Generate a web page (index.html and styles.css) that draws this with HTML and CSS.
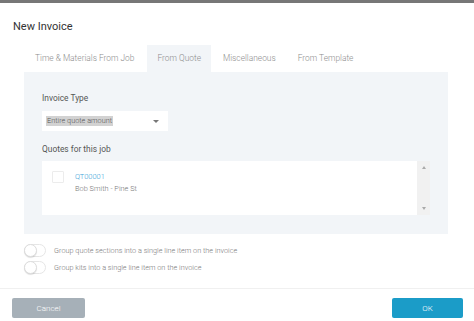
FILE: index.html
```html
<!DOCTYPE html>
<html lang="en">
<head>
  <meta charset="UTF-8">
  <title>New Invoice</title>
  <link rel="stylesheet" href="styles.css">
</head>
<body>
  <div class="topbar"></div>

  <div class="dialog">
    <h1 class="title">New Invoice</h1>

    <!-- Tabs -->
    <div class="tabs">
      <div class="tab">Time &amp; Materials From Job</div>
      <div class="tab active">From Quote</div>
      <div class="tab">Miscellaneous</div>
      <div class="tab">From Template</div>
    </div>

    <!-- From Quote panel -->
    <div class="panel">
      <label class="field-label">Invoice Type</label>
      <div class="select">
        <span class="select-text">Entire quote amount</span>
        <span class="caret"></span>
      </div>

      <label class="field-label quotes-label">Quotes for this job</label>
      <div class="quote-list">
        <div class="quote-items">
          <div class="quote-row">
            <span class="checkbox"></span>
            <div class="quote-info">
              <a class="quote-num">QT00001</a>
              <div class="quote-client">Bob Smith - Pine St</div>
            </div>
          </div>
        </div>
        <div class="scrollbar">
          <span class="arrow up"></span>
          <span class="arrow down"></span>
        </div>
      </div>
    </div>

    <!-- Options -->
    <div class="options">
      <div class="option">
        <span class="toggle"><span class="knob"></span></span>
        <span>Group quote sections into a single line item on the invoice</span>
      </div>
      <div class="option">
        <span class="toggle"><span class="knob"></span></span>
        <span>Group kits into a single line item on the invoice</span>
      </div>
    </div>
  </div>

  <div class="footer">
    <button class="btn btn-cancel">Cancel</button>
    <button class="btn btn-ok">OK</button>
  </div>
</body>
</html>
```

FILE: styles.css
```css
/* ====== BASE ====== */
html, body {
  margin: 0;
  padding: 0;
}

body {
  width: 474px;
  height: 321px;
  background: #ffffff;
  font-family: Roboto, "Liberation Sans", sans-serif;
  color: #444;
  overflow: hidden;
}

.topbar {
  height: 3px;
  background: #777;
}

/* ====== DIALOG ====== */
.dialog {
  height: 286px;
  border-bottom: 1px solid #f0f0f0;
  box-sizing: border-box;
}

.title {
  margin: 0;
  padding: 17px 0 0 13px;
  height: 25px;
  font-size: 11px;
  font-weight: 400;
  color: #333;
  line-height: 14px;
}

/* ====== TABS ====== */
.tabs {
  display: flex;
  margin-left: 24px;
}

.tab {
  height: 27px;
  line-height: 27px;
  padding: 0 11px;
  font-size: 8.4px;
  font-weight: 300;
  color: #8e8e8e;
}
.tab:first-child {
  padding: 0 13px 0 11px;
}
.tab:nth-child(2) {
  padding: 0 10px;
}
.tab:nth-child(3) {
  padding: 0 11px 0 12px;
}
.tab:nth-child(4) {
  padding-left: 11px;
}
.tab.active {
  background: #f2f5f8;
}

/* ====== PANEL ====== */
.panel {
  margin: 0 26px 0 24px;
  padding: 20px 18px 19px 18px;
  background: #f2f5f8;
  height: 162px;
  box-sizing: border-box;
}

.field-label {
  display: block;
  font-size: 8.4px;
  color: #555;
  line-height: 12px;
}

.select {
  margin-top: 7px;
  width: 126px;
  height: 20px;
  background: #fff;
  display: flex;
  align-items: center;
  justify-content: space-between;
  padding: 0 9px 0 4px;
  box-sizing: border-box;
}
.select-text {
  font-size: 7.3px;
  font-weight: 300;
  color: #555;
  background: #d2d2d2;
  padding: 0 1px;
  line-height: 10px;
}
.caret {
  width: 0;
  height: 0;
  border-left: 3px solid transparent;
  border-right: 3px solid transparent;
  border-top: 3px solid #777;
}

.quotes-label {
  margin-top: 12px;
}

.quote-list {
  margin-top: 6px;
  display: flex;
  height: 54px;
}
.quote-items {
  flex: 1;
  background: #fff;
}
.quote-row {
  display: flex;
  padding: 10px 10px;
}
.checkbox {
  width: 10px;
  height: 10px;
  border: 1px solid #ececec;
  border-radius: 1px;
  margin-right: 11px;
}
.quote-info {
  font-size: 7.4px;
  font-weight: 300;
  line-height: 12px;
}
.quote-num {
  color: #3ea3d8;
}
.quote-client {
  color: #777;
}

.scrollbar {
  width: 13px;
  background: #f1f1f1;
  display: flex;
  flex-direction: column;
  justify-content: space-between;
  align-items: center;
  padding: 5px 0;
  box-sizing: border-box;
}
.arrow {
  width: 0;
  height: 0;
  border-left: 2.5px solid transparent;
  border-right: 2.5px solid transparent;
}
.arrow.up {
  border-bottom: 3px solid #aaa;
}
.arrow.down {
  border-top: 3px solid #aaa;
}

/* ====== OPTIONS ====== */
.options {
  padding: 8px 0 0 24px;
}
.option {
  display: flex;
  align-items: center;
  height: 17px;
  font-size: 7.3px;
  font-weight: 300;
  color: #7a7a7a;
}
.toggle {
  width: 20px;
  height: 11px;
  border: 1px solid #e6e6e6;
  border-radius: 7px;
  margin-right: 8px;
  position: relative;
  background: #fff;
}
.knob {
  position: absolute;
  left: -1px;
  top: -1px;
  width: 11px;
  height: 11px;
  border-radius: 50%;
  border: 1px solid #ddd;
  background: #fff;
  box-shadow: 0 1px 1px rgba(0, 0, 0, 0.12);
}

/* ====== FOOTER ====== */
.footer {
  display: flex;
  justify-content: space-between;
  padding: 9px 11px 0 12px;
}
.btn {
  height: 20px;
  border: none;
  border-radius: 2px;
  color: #fff;
  font-family: Roboto, "Liberation Sans", sans-serif;
  font-size: 8px;
  font-weight: 300;
  padding: 0;
}
.btn-cancel {
  width: 73px;
  background: #a6b0b8;
}
.btn-ok {
  width: 71px;
  background: #1b9cc8;
}
```
